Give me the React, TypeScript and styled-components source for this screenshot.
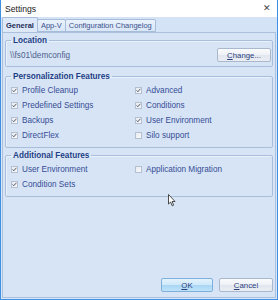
import React from "react";
import styled, { createGlobalStyle } from "styled-components";

const Global = createGlobalStyle`
  html, body { margin: 0; padding: 0; background: #ffffff; }
  body { font-family: "Liberation Sans", Arial, sans-serif; }
`;

const Window = styled.div`
  position: relative;
  width: 278px;
  height: 300px;
  box-sizing: border-box;
  border: 1px solid #3f8fe2;
  border-top: none;
  background: #d9e6f6;
  display: flex;
  flex-direction: column;
  overflow: hidden;
`;

const TitleBar = styled.div`
  height: 17px;
  background: #ffffff;
  display: flex;
  align-items: center;
  justify-content: space-between;
  padding: 0 6px 0 4px;
  font-size: 8.6px;
  color: #1a1a1a;
`;

const CloseGlyph = styled.span`
  font-size: 9px;
  color: #444;
  line-height: 1;
`;

const TabStrip = styled.div`
  height: 15px;
  display: flex;
  align-items: flex-end;
  padding-left: 1px;
  background: #d4e3f5;
`;

const Tab = styled.div<{ $active?: boolean }>`
  height: ${(p) => (p.$active ? 15 : 13)}px;
  box-sizing: border-box;
  padding: 0 3px;
  display: flex;
  align-items: center;
  font-size: 7.5px;
  font-weight: ${(p) => (p.$active ? 700 : 400)};
  color: ${(p) => (p.$active ? "#1d2c57" : "#3b4f8a")};
  background: ${(p) => (p.$active ? "#dde9f8" : "linear-gradient(#eaf2fc, #d8e6f7)")};
  border: 1px solid #a7bcd8;
  border-bottom: ${(p) => (p.$active ? "none" : "1px solid #a7bcd8")};
  border-radius: 2px 2px 0 0;
  margin-right: -1px;
  position: relative;
  z-index: ${(p) => (p.$active ? 1 : 0)};
`;

const Panel = styled.div`
  flex: 1;
  margin: 0 1px 1px 1px;
  border: 1px solid #aac0dc;
  background: #d6e4f5;
  display: flex;
  flex-direction: column;
  padding: 3px 2px 5px 2px;
`;

const Group = styled.fieldset<{ $mt: number; $pb: number }>`
  margin: ${(p) => p.$mt}px 0 0 0;
  padding: 0 4px ${(p) => p.$pb}px 4px;
  border: 1px solid #a9bedb;
  box-shadow: inset 1px 1px 0 #e9f1fb;
  border-radius: 2px;
  min-width: 0;
`;

const Legend = styled.legend`
  padding: 0 2px;
  margin-left: 1px;
  font-size: 8.2px;
  font-weight: 700;
  color: #1e3f86;
`;

const LocationRow = styled.div`
  display: flex;
  align-items: center;
  justify-content: space-between;
  padding: 3px 0 0 0;
  margin-right: -3px;
`;

const PathText = styled.span`
  font-size: 8.2px;
  color: #4d5f8d;
`;

const Button = styled.div<{ $primary?: boolean }>`
  width: ${(p) => (p.$primary ? 52 : 54)}px;
  height: 14px;
  box-sizing: border-box;
  display: flex;
  align-items: center;
  justify-content: center;
  font-size: 7.8px;
  color: #2b3f7c;
  border: 1px solid ${(p) => (p.$primary ? "#7fb0dc" : "#a9b8cc")};
  border-radius: 2px;
  background: ${(p) =>
    p.$primary
      ? "linear-gradient(#e4f3fd 0%, #cfe8fa 50%, #a9d6f5 51%, #bde2f8 100%)"
      : "linear-gradient(#fafbfd 0%, #eef1f6 50%, #e2e7ef 51%, #eaedf3 100%)"};
`;

const U = styled.span`
  text-decoration: underline;
`;

const Grid = styled.div`
  display: grid;
  grid-template-columns: 124px 1fr;
  row-gap: 4px;
  padding: 4px 0 1px 1px;
`;

const Item = styled.div`
  display: flex;
  align-items: center;
  height: 11px;
  gap: 4px;
  font-size: 8.2px;
  color: #374d95;
`;

const Box = styled.span`
  width: 7px;
  height: 7px;
  box-sizing: border-box;
  border: 1px solid #b4bfcf;
  background: linear-gradient(135deg, #e8ecf2, #f7f8fa);
  display: flex;
  align-items: center;
  justify-content: center;
`;

const Spacer = styled.div`
  flex: 1;
`;

const Footer = styled.div`
  display: flex;
  justify-content: flex-end;
  gap: 6px;
  padding-right: 0px;
`;

const Cursor = styled.svg`
  position: absolute;
  left: 167px;
  top: 194px;
`;

const Check = ({ on }: { on: boolean }) => (
  <Box>
    {on && (
      <svg width="5" height="5" viewBox="0 0 5 5">
        <path d="M0.6 2.4 L1.8 3.8 L4.4 0.8" stroke="#555c6a" strokeWidth="1" fill="none" />
      </svg>
    )}
  </Box>
);

const CB = ({ on, label }: { on: boolean; label: string }) => (
  <Item>
    <Check on={on} />
    <span>{label}</span>
  </Item>
);

export default function App() {
  return (
    <>
      <Global />
      <Window>
        <TitleBar>
          <span>Settings</span>
          <CloseGlyph>✕</CloseGlyph>
        </TitleBar>
        <TabStrip>
          <Tab $active>General</Tab>
          <Tab>App-V</Tab>
          <Tab>Configuration Changelog</Tab>
        </TabStrip>
        <Panel>
          <Group $mt={0} $pb={4}>
            <Legend>Location</Legend>
            <LocationRow>
              <PathText>\\fs01\demconfig</PathText>
              <Button>
                <U>C</U>hange...
              </Button>
            </LocationRow>
          </Group>
          <Group $mt={5} $pb={5}>
            <Legend>Personalization Features</Legend>
            <Grid>
              <CB on label="Profile Cleanup" />
              <CB on label="Advanced" />
              <CB on label="Predefined Settings" />
              <CB on label="Conditions" />
              <CB on label="Backups" />
              <CB on label="User Environment" />
              <CB on label="DirectFlex" />
              <CB on={false} label="Silo support" />
            </Grid>
          </Group>
          <Group $mt={3} $pb={5}>
            <Legend>Additional Features</Legend>
            <Grid>
              <CB on label="User Environment" />
              <CB on={false} label="Application Migration" />
              <CB on label="Condition Sets" />
            </Grid>
          </Group>
          <Spacer />
          <Footer>
            <Button $primary>
              <U>O</U>K
            </Button>
            <Button>
              <U>C</U>ancel
            </Button>
          </Footer>
        </Panel>
        <Cursor width="8" height="13" viewBox="0 0 8 13">
          <path d="M0.5 0.5 L0.5 10 L2.6 8 L4.2 11.8 L5.6 11.2 L4.1 7.5 L7 7.5 Z" fill="#fff" stroke="#222" strokeWidth="0.8" />
        </Cursor>
      </Window>
    </>
  );
}
